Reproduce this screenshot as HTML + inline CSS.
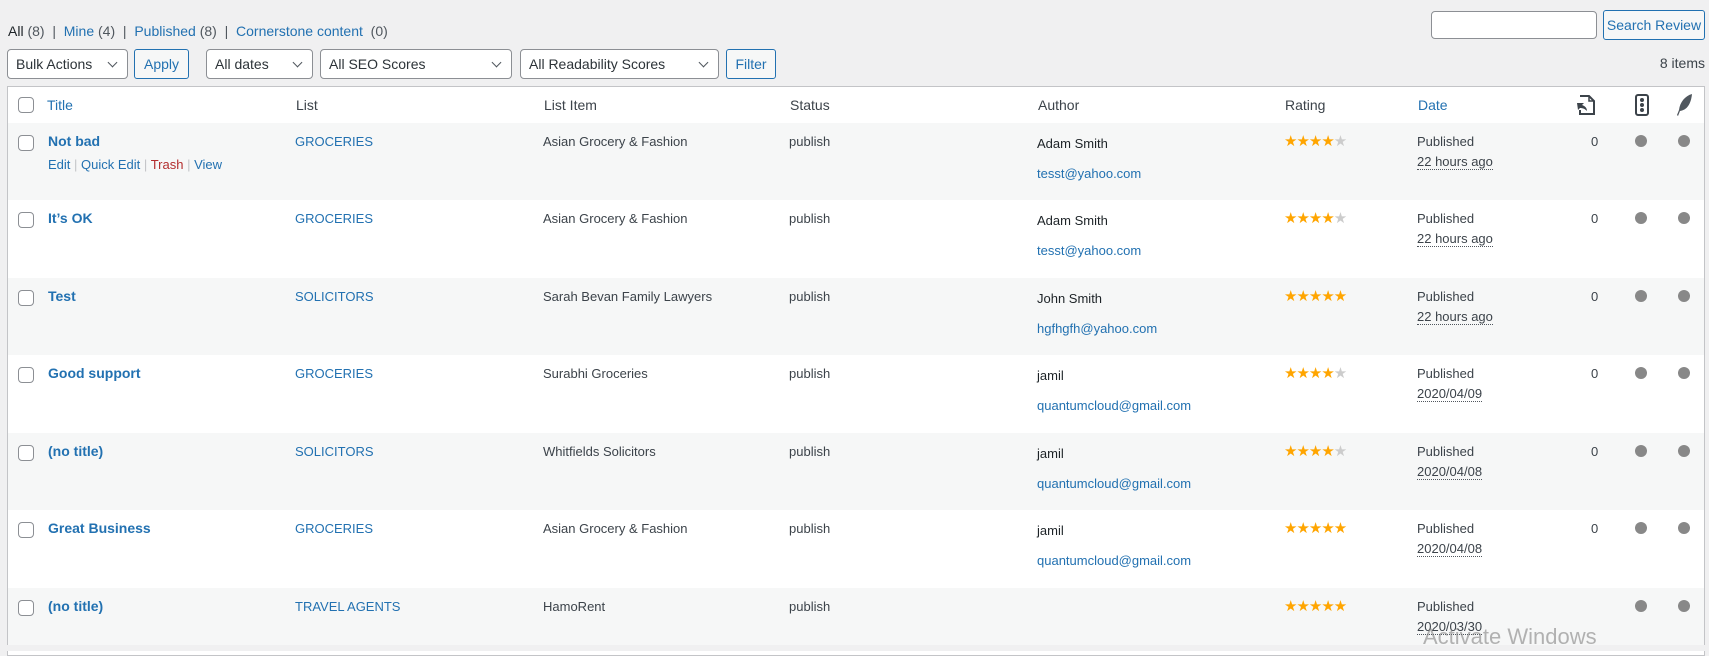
<!DOCTYPE html>
<html><head><meta charset="utf-8"><style>
*{box-sizing:border-box;margin:0;padding:0}
body{width:1709px;height:651px;overflow:hidden;background:#f0f0f1;font-family:"Liberation Sans",Arial,sans-serif;font-size:14px;color:#3c434a;position:relative}
.a{position:absolute;white-space:nowrap}
a,.l{color:#2271b1;text-decoration:none}
.sel{position:absolute;top:49px;height:30px;border:1px solid #8c8f94;border-radius:4px;background:#fff;padding:6px 8px;font-size:14px;color:#2c3338}
.sel:after{content:"";position:absolute;right:11px;top:9px;width:6px;height:6px;border-right:1.5px solid #50575e;border-bottom:1.5px solid #50575e;transform:rotate(45deg)}
.btn{position:absolute;height:30px;border:1px solid #2271b1;border-radius:3px;background:#f6f7f7;color:#2271b1;text-align:center;padding-top:6px;font-size:14px}
.tbl{position:absolute;left:7px;top:86px;width:1698px;height:570px;background:#fff;border:1px solid #c3c4c7}
.hd{position:absolute;left:0;top:0;width:100%;height:37px;border-bottom:1px solid #c3c4c7}
.row{position:absolute;left:0;width:100%;height:77px}
.alt{background:#f6f7f7}
.cb{position:absolute;left:10px;width:16px;height:16px;border:1px solid #8c8f94;border-radius:4px;background:#fff}
.st{position:absolute;letter-spacing:-1px;font-size:15px;color:#ffa500}
.st i{font-style:normal;color:#ccc}
.dot{position:absolute;width:12px;height:12px;border-radius:50%;background:#888}
.u{border-bottom:1px dotted #50575e}
</style></head><body>
<div class="a" style="left:8px;top:23px;color:#50575e"><span style="color:#1d2327">All</span> (8) &nbsp;|&nbsp; <span class="l">Mine</span> (4) &nbsp;|&nbsp; <span class="l">Published</span> (8) &nbsp;|&nbsp; <span class="l">Cornerstone content</span> &nbsp;(0)</div>
<div style="position:absolute;left:1431px;top:11px;width:166px;height:28px;border:1px solid #8c8f94;border-radius:4px;background:#fff"></div>
<div class="btn" style="left:1603px;top:10px;width:102px">Search Review</div>
<div class="sel" style="left:7px;width:121px">Bulk Actions</div>
<div class="btn" style="left:134px;top:49px;width:55px">Apply</div>
<div class="sel" style="left:206px;width:107px">All dates</div>
<div class="sel" style="left:320px;width:192px">All SEO Scores</div>
<div class="sel" style="left:520px;width:199px">All Readability Scores</div>
<div class="btn" style="left:726px;top:49px;width:50px">Filter</div>
<div class="a" style="right:4px;top:55px;color:#3c434a">8 items</div>
<div class="tbl">
<div class="hd">
<div class="cb" style="top:10px"></div>
<div class="a l" style="left:39px;top:10px">Title</div>
<div class="a" style="left:288px;top:10px">List</div>
<div class="a" style="left:536px;top:10px">List Item</div>
<div class="a" style="left:782px;top:10px">Status</div>
<div class="a" style="left:1030px;top:10px">Author</div>
<div class="a" style="left:1277px;top:10px">Rating</div>
<div class="a l" style="left:1410px;top:10px">Date</div>
<svg class="a" style="left:1567px;top:7px" width="22" height="22" viewBox="0 0 22 22"><path d="M5 2h9l5 5v13H5v-4" fill="none" stroke="#3c434a" stroke-width="2"/><path d="M14 2v5h5" fill="none" stroke="#3c434a" stroke-width="1.5"/><path d="M2 9h7l-2 2c3 1 5 3 5 6-2-2-4-3-7-3l-2 2z" fill="#3c434a"/></svg>
<svg class="a" style="left:1626px;top:7px" width="16" height="22" viewBox="0 0 16 22"><rect x="2" y="1" width="12" height="20" rx="2" fill="none" stroke="#3c434a" stroke-width="2"/><circle cx="8" cy="6" r="2" fill="#3c434a"/><circle cx="8" cy="11" r="2" fill="#3c434a"/><circle cx="8" cy="16" r="2" fill="#3c434a"/></svg>
<svg class="a" style="left:1667px;top:6px" width="18" height="24" viewBox="0 0 18 24"><path d="M17 1C10 3 5 9 4 17l-2 5 1 1 2-5c7-1 11-7 12-17z" fill="#50575e"/></svg>
</div>
</div>
<div style="position:absolute;left:8px;top:123px;width:1696px;height:522px">
<div class="row alt" style="top:0"><div class="cb" style="top:12px"></div>
<div class="a l" style="left:40px;top:10px;font-weight:bold">Not bad</div>
<div class="a" style="left:40px;top:34px;font-size:13px"><span class="l">Edit</span> <span style="color:#c3c4c7">|</span> <span class="l">Quick Edit</span> <span style="color:#c3c4c7">|</span> <span style="color:#b32d2e">Trash</span> <span style="color:#c3c4c7">|</span> <span class="l">View</span></div>
<div class="a l" style="left:287px;top:11px;font-size:13px">GROCERIES</div><div class="a" style="left:535px;top:11px;font-size:13px">Asian Grocery &amp; Fashion</div><div class="a" style="left:781px;top:11px;font-size:13px">publish</div>
<div class="a" style="left:1029px;top:13px;color:#1d2327;font-size:13px">Adam Smith</div><div class="a l" style="left:1029px;top:43px;font-size:13px">tesst@yahoo.com</div>
<div class="st" style="left:1276px;top:9px">★★★★<i>★</i></div>
<div class="a" style="left:1409px;top:11px;font-size:13px">Published<br><span class="u" style="line-height:26px">22 hours ago</span></div>
<div class="a" style="left:1583px;top:11px;font-size:13px">0</div><div class="dot" style="left:1627px;top:12px"></div><div class="dot" style="left:1670px;top:12px"></div></div>

<div class="row" style="top:77px"><div class="cb" style="top:12px"></div>
<div class="a l" style="left:40px;top:10px;font-weight:bold">It’s OK</div>
<div class="a l" style="left:287px;top:11px;font-size:13px">GROCERIES</div><div class="a" style="left:535px;top:11px;font-size:13px">Asian Grocery &amp; Fashion</div><div class="a" style="left:781px;top:11px;font-size:13px">publish</div>
<div class="a" style="left:1029px;top:13px;color:#1d2327;font-size:13px">Adam Smith</div><div class="a l" style="left:1029px;top:43px;font-size:13px">tesst@yahoo.com</div>
<div class="st" style="left:1276px;top:9px">★★★★<i>★</i></div>
<div class="a" style="left:1409px;top:11px;font-size:13px">Published<br><span class="u" style="line-height:26px">22 hours ago</span></div>
<div class="a" style="left:1583px;top:11px;font-size:13px">0</div><div class="dot" style="left:1627px;top:12px"></div><div class="dot" style="left:1670px;top:12px"></div></div>

<div class="row alt" style="top:155px"><div class="cb" style="top:12px"></div>
<div class="a l" style="left:40px;top:10px;font-weight:bold">Test</div>
<div class="a l" style="left:287px;top:11px;font-size:13px">SOLICITORS</div><div class="a" style="left:535px;top:11px;font-size:13px">Sarah Bevan Family Lawyers</div><div class="a" style="left:781px;top:11px;font-size:13px">publish</div>
<div class="a" style="left:1029px;top:13px;color:#1d2327;font-size:13px">John Smith</div><div class="a l" style="left:1029px;top:43px;font-size:13px">hgfhgfh@yahoo.com</div>
<div class="st" style="left:1276px;top:9px">★★★★★</div>
<div class="a" style="left:1409px;top:11px;font-size:13px">Published<br><span class="u" style="line-height:26px">22 hours ago</span></div>
<div class="a" style="left:1583px;top:11px;font-size:13px">0</div><div class="dot" style="left:1627px;top:12px"></div><div class="dot" style="left:1670px;top:12px"></div></div>

<div class="row" style="top:232px"><div class="cb" style="top:12px"></div>
<div class="a l" style="left:40px;top:10px;font-weight:bold">Good support</div>
<div class="a l" style="left:287px;top:11px;font-size:13px">GROCERIES</div><div class="a" style="left:535px;top:11px;font-size:13px">Surabhi Groceries</div><div class="a" style="left:781px;top:11px;font-size:13px">publish</div>
<div class="a" style="left:1029px;top:13px;color:#1d2327;font-size:13px">jamil</div><div class="a l" style="left:1029px;top:43px;font-size:13px">quantumcloud@gmail.com</div>
<div class="st" style="left:1276px;top:9px">★★★★<i>★</i></div>
<div class="a" style="left:1409px;top:11px;font-size:13px">Published<br><span class="u" style="line-height:26px">2020/04/09</span></div>
<div class="a" style="left:1583px;top:11px;font-size:13px">0</div><div class="dot" style="left:1627px;top:12px"></div><div class="dot" style="left:1670px;top:12px"></div></div>

<div class="row alt" style="top:310px"><div class="cb" style="top:12px"></div>
<div class="a l" style="left:40px;top:10px;font-weight:bold">(no title)</div>
<div class="a l" style="left:287px;top:11px;font-size:13px">SOLICITORS</div><div class="a" style="left:535px;top:11px;font-size:13px">Whitfields Solicitors</div><div class="a" style="left:781px;top:11px;font-size:13px">publish</div>
<div class="a" style="left:1029px;top:13px;color:#1d2327;font-size:13px">jamil</div><div class="a l" style="left:1029px;top:43px;font-size:13px">quantumcloud@gmail.com</div>
<div class="st" style="left:1276px;top:9px">★★★★<i>★</i></div>
<div class="a" style="left:1409px;top:11px;font-size:13px">Published<br><span class="u" style="line-height:26px">2020/04/08</span></div>
<div class="a" style="left:1583px;top:11px;font-size:13px">0</div><div class="dot" style="left:1627px;top:12px"></div><div class="dot" style="left:1670px;top:12px"></div></div>

<div class="row" style="top:387px"><div class="cb" style="top:12px"></div>
<div class="a l" style="left:40px;top:10px;font-weight:bold">Great Business</div>
<div class="a l" style="left:287px;top:11px;font-size:13px">GROCERIES</div><div class="a" style="left:535px;top:11px;font-size:13px">Asian Grocery &amp; Fashion</div><div class="a" style="left:781px;top:11px;font-size:13px">publish</div>
<div class="a" style="left:1029px;top:13px;color:#1d2327;font-size:13px">jamil</div><div class="a l" style="left:1029px;top:43px;font-size:13px">quantumcloud@gmail.com</div>
<div class="st" style="left:1276px;top:9px">★★★★★</div>
<div class="a" style="left:1409px;top:11px;font-size:13px">Published<br><span class="u" style="line-height:26px">2020/04/08</span></div>
<div class="a" style="left:1583px;top:11px;font-size:13px">0</div><div class="dot" style="left:1627px;top:12px"></div><div class="dot" style="left:1670px;top:12px"></div></div>

<div class="row alt" style="top:465px;height:57px"><div class="cb" style="top:12px"></div>
<div class="a l" style="left:40px;top:10px;font-weight:bold">(no title)</div>
<div class="a l" style="left:287px;top:11px;font-size:13px">TRAVEL AGENTS</div><div class="a" style="left:535px;top:11px;font-size:13px">HamoRent</div><div class="a" style="left:781px;top:11px;font-size:13px">publish</div>
<div class="st" style="left:1276px;top:9px">★★★★★</div>
<div class="a" style="left:1409px;top:11px;font-size:13px">Published<br><span class="u" style="line-height:26px">2020/03/30</span></div>
<div class="dot" style="left:1627px;top:12px"></div><div class="dot" style="left:1670px;top:12px"></div></div>
</div>
<div style="position:absolute;left:0;top:645px;width:1709px;height:6px;background:#f0f0f1"></div>
<div class="a" style="left:1423px;top:624px;font-size:22px;color:rgba(120,120,120,.55)">Activate Windows</div>
</body></html>
